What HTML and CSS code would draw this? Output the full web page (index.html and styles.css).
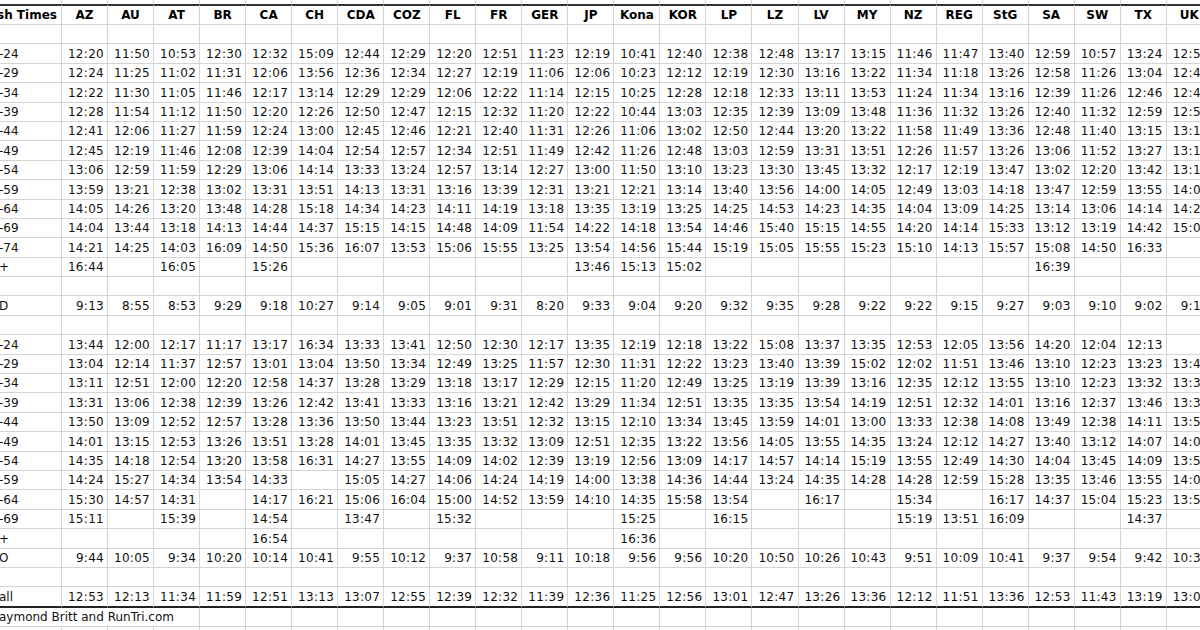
FILE: index.html
```html
<!DOCTYPE html>
<html>
<head>
<meta charset="utf-8">
<link rel="stylesheet" href="styles.css">
</head>
<body>
<div class="sheet">
<div class="row strip"><span class="lbl"></span><span></span><span></span><span></span><span></span><span></span><span></span><span></span><span></span><span></span><span></span><span></span><span></span><span></span><span></span><span></span><span></span><span></span><span></span><span></span><span></span><span></span><span></span><span></span><span></span><span></span></div>
<div class="row head"><span class="lbl">sh Times</span><span>AZ</span><span>AU</span><span>AT</span><span>BR</span><span>CA</span><span>CH</span><span>CDA</span><span>COZ</span><span>FL</span><span>FR</span><span>GER</span><span>JP</span><span>Kona</span><span>KOR</span><span>LP</span><span>LZ</span><span>LV</span><span>MY</span><span>NZ</span><span>REG</span><span>StG</span><span>SA</span><span>SW</span><span>TX</span><span>UK</span></div>
<div class="row"><span class="lbl"></span><span></span><span></span><span></span><span></span><span></span><span></span><span></span><span></span><span></span><span></span><span></span><span></span><span></span><span></span><span></span><span></span><span></span><span></span><span></span><span></span><span></span><span></span><span></span><span></span><span></span></div>
<div class="row"><span class="lbl">-24</span><span>12:20</span><span>11:50</span><span>10:53</span><span>12:30</span><span>12:32</span><span>15:09</span><span>12:44</span><span>12:29</span><span>12:20</span><span>12:51</span><span>11:23</span><span>12:19</span><span>10:41</span><span>12:40</span><span>12:38</span><span>12:48</span><span>13:17</span><span>13:15</span><span>11:46</span><span>11:47</span><span>13:40</span><span>12:59</span><span>10:57</span><span>13:24</span><span>12:52</span></div>
<div class="row"><span class="lbl">-29</span><span>12:24</span><span>11:25</span><span>11:02</span><span>11:31</span><span>12:06</span><span>13:56</span><span>12:36</span><span>12:34</span><span>12:27</span><span>12:19</span><span>11:06</span><span>12:06</span><span>10:23</span><span>12:12</span><span>12:19</span><span>12:30</span><span>13:16</span><span>13:22</span><span>11:34</span><span>11:18</span><span>13:26</span><span>12:58</span><span>11:26</span><span>13:04</span><span>12:41</span></div>
<div class="row"><span class="lbl">-34</span><span>12:22</span><span>11:30</span><span>11:05</span><span>11:46</span><span>12:17</span><span>13:14</span><span>12:29</span><span>12:29</span><span>12:06</span><span>12:22</span><span>11:14</span><span>12:15</span><span>10:25</span><span>12:28</span><span>12:18</span><span>12:33</span><span>13:11</span><span>13:53</span><span>11:24</span><span>11:34</span><span>13:16</span><span>12:39</span><span>11:26</span><span>12:46</span><span>12:44</span></div>
<div class="row"><span class="lbl">-39</span><span>12:28</span><span>11:54</span><span>11:12</span><span>11:50</span><span>12:20</span><span>12:26</span><span>12:50</span><span>12:47</span><span>12:15</span><span>12:32</span><span>11:20</span><span>12:22</span><span>10:44</span><span>13:03</span><span>12:35</span><span>12:39</span><span>13:09</span><span>13:48</span><span>11:36</span><span>11:32</span><span>13:26</span><span>12:40</span><span>11:32</span><span>12:59</span><span>12:55</span></div>
<div class="row"><span class="lbl">-44</span><span>12:41</span><span>12:06</span><span>11:27</span><span>11:59</span><span>12:24</span><span>13:00</span><span>12:45</span><span>12:46</span><span>12:21</span><span>12:40</span><span>11:31</span><span>12:26</span><span>11:06</span><span>13:02</span><span>12:50</span><span>12:44</span><span>13:20</span><span>13:22</span><span>11:58</span><span>11:49</span><span>13:36</span><span>12:48</span><span>11:40</span><span>13:15</span><span>13:10</span></div>
<div class="row"><span class="lbl">-49</span><span>12:45</span><span>12:19</span><span>11:46</span><span>12:08</span><span>12:39</span><span>14:04</span><span>12:54</span><span>12:57</span><span>12:34</span><span>12:51</span><span>11:49</span><span>12:42</span><span>11:26</span><span>12:48</span><span>13:03</span><span>12:59</span><span>13:31</span><span>13:51</span><span>12:26</span><span>11:57</span><span>13:26</span><span>13:06</span><span>11:52</span><span>13:27</span><span>13:14</span></div>
<div class="row"><span class="lbl">-54</span><span>13:06</span><span>12:59</span><span>11:59</span><span>12:29</span><span>13:06</span><span>14:14</span><span>13:33</span><span>13:24</span><span>12:57</span><span>13:14</span><span>12:27</span><span>13:00</span><span>11:50</span><span>13:10</span><span>13:23</span><span>13:30</span><span>13:45</span><span>13:32</span><span>12:17</span><span>12:19</span><span>13:47</span><span>13:02</span><span>12:20</span><span>13:42</span><span>13:17</span></div>
<div class="row"><span class="lbl">-59</span><span>13:59</span><span>13:21</span><span>12:38</span><span>13:02</span><span>13:31</span><span>13:51</span><span>14:13</span><span>13:31</span><span>13:16</span><span>13:39</span><span>12:31</span><span>13:21</span><span>12:21</span><span>13:14</span><span>13:40</span><span>13:56</span><span>14:00</span><span>14:05</span><span>12:49</span><span>13:03</span><span>14:18</span><span>13:47</span><span>12:59</span><span>13:55</span><span>14:02</span></div>
<div class="row"><span class="lbl">-64</span><span>14:05</span><span>14:26</span><span>13:20</span><span>13:48</span><span>14:28</span><span>15:18</span><span>14:34</span><span>14:23</span><span>14:11</span><span>14:19</span><span>13:18</span><span>13:35</span><span>13:19</span><span>13:25</span><span>14:25</span><span>14:53</span><span>14:23</span><span>14:35</span><span>14:04</span><span>13:09</span><span>14:25</span><span>13:14</span><span>13:06</span><span>14:14</span><span>14:20</span></div>
<div class="row"><span class="lbl">-69</span><span>14:04</span><span>13:44</span><span>13:18</span><span>14:13</span><span>14:44</span><span>14:37</span><span>15:15</span><span>14:15</span><span>14:48</span><span>14:09</span><span>11:54</span><span>14:22</span><span>14:18</span><span>13:54</span><span>14:46</span><span>15:40</span><span>15:15</span><span>14:55</span><span>14:20</span><span>14:14</span><span>15:33</span><span>13:12</span><span>13:19</span><span>14:42</span><span>15:01</span></div>
<div class="row"><span class="lbl">-74</span><span>14:21</span><span>14:25</span><span>14:03</span><span>16:09</span><span>14:50</span><span>15:36</span><span>16:07</span><span>13:53</span><span>15:06</span><span>15:55</span><span>13:25</span><span>13:54</span><span>14:56</span><span>15:44</span><span>15:19</span><span>15:05</span><span>15:55</span><span>15:23</span><span>15:10</span><span>14:13</span><span>15:57</span><span>15:08</span><span>14:50</span><span>16:33</span><span></span></div>
<div class="row"><span class="lbl">+</span><span>16:44</span><span></span><span>16:05</span><span></span><span>15:26</span><span></span><span></span><span></span><span></span><span></span><span></span><span>13:46</span><span>15:13</span><span>15:02</span><span></span><span></span><span></span><span></span><span></span><span></span><span></span><span>16:39</span><span></span><span></span><span></span></div>
<div class="row"><span class="lbl"></span><span></span><span></span><span></span><span></span><span></span><span></span><span></span><span></span><span></span><span></span><span></span><span></span><span></span><span></span><span></span><span></span><span></span><span></span><span></span><span></span><span></span><span></span><span></span><span></span><span></span></div>
<div class="row"><span class="lbl">D</span><span>9:13</span><span>8:55</span><span>8:53</span><span>9:29</span><span>9:18</span><span>10:27</span><span>9:14</span><span>9:05</span><span>9:01</span><span>9:31</span><span>8:20</span><span>9:33</span><span>9:04</span><span>9:20</span><span>9:32</span><span>9:35</span><span>9:28</span><span>9:22</span><span>9:22</span><span>9:15</span><span>9:27</span><span>9:03</span><span>9:10</span><span>9:02</span><span>9:14</span></div>
<div class="row"><span class="lbl"></span><span></span><span></span><span></span><span></span><span></span><span></span><span></span><span></span><span></span><span></span><span></span><span></span><span></span><span></span><span></span><span></span><span></span><span></span><span></span><span></span><span></span><span></span><span></span><span></span><span></span></div>
<div class="row"><span class="lbl">-24</span><span>13:44</span><span>12:00</span><span>12:17</span><span>11:17</span><span>13:17</span><span>16:34</span><span>13:33</span><span>13:41</span><span>12:50</span><span>12:30</span><span>12:17</span><span>13:35</span><span>12:19</span><span>12:18</span><span>13:22</span><span>15:08</span><span>13:37</span><span>13:35</span><span>12:53</span><span>12:05</span><span>13:56</span><span>14:20</span><span>12:04</span><span>12:13</span><span></span></div>
<div class="row"><span class="lbl">-29</span><span>13:04</span><span>12:14</span><span>11:37</span><span>12:57</span><span>13:01</span><span>13:04</span><span>13:50</span><span>13:34</span><span>12:49</span><span>13:25</span><span>11:57</span><span>12:30</span><span>11:31</span><span>12:22</span><span>13:23</span><span>13:40</span><span>13:39</span><span>15:02</span><span>12:02</span><span>11:51</span><span>13:46</span><span>13:10</span><span>12:23</span><span>13:23</span><span>13:45</span></div>
<div class="row"><span class="lbl">-34</span><span>13:11</span><span>12:51</span><span>12:00</span><span>12:20</span><span>12:58</span><span>14:37</span><span>13:28</span><span>13:29</span><span>13:18</span><span>13:17</span><span>12:29</span><span>12:15</span><span>11:20</span><span>12:49</span><span>13:25</span><span>13:19</span><span>13:39</span><span>13:16</span><span>12:35</span><span>12:12</span><span>13:55</span><span>13:10</span><span>12:23</span><span>13:32</span><span>13:31</span></div>
<div class="row"><span class="lbl">-39</span><span>13:31</span><span>13:06</span><span>12:38</span><span>12:39</span><span>13:26</span><span>12:42</span><span>13:41</span><span>13:33</span><span>13:16</span><span>13:21</span><span>12:42</span><span>13:29</span><span>11:34</span><span>12:51</span><span>13:35</span><span>13:35</span><span>13:54</span><span>14:19</span><span>12:51</span><span>12:32</span><span>14:01</span><span>13:16</span><span>12:37</span><span>13:46</span><span>13:38</span></div>
<div class="row"><span class="lbl">-44</span><span>13:50</span><span>13:09</span><span>12:52</span><span>12:57</span><span>13:28</span><span>13:36</span><span>13:50</span><span>13:44</span><span>13:23</span><span>13:51</span><span>12:32</span><span>13:15</span><span>12:10</span><span>13:34</span><span>13:45</span><span>13:59</span><span>14:01</span><span>13:00</span><span>13:33</span><span>12:38</span><span>14:08</span><span>13:49</span><span>12:38</span><span>14:11</span><span>13:52</span></div>
<div class="row"><span class="lbl">-49</span><span>14:01</span><span>13:15</span><span>12:53</span><span>13:26</span><span>13:51</span><span>13:28</span><span>14:01</span><span>13:45</span><span>13:35</span><span>13:32</span><span>13:09</span><span>12:51</span><span>12:35</span><span>13:22</span><span>13:56</span><span>14:05</span><span>13:55</span><span>14:35</span><span>13:24</span><span>12:12</span><span>14:27</span><span>13:40</span><span>13:12</span><span>14:07</span><span>14:03</span></div>
<div class="row"><span class="lbl">-54</span><span>14:35</span><span>14:18</span><span>12:54</span><span>13:20</span><span>13:58</span><span>16:31</span><span>14:27</span><span>13:55</span><span>14:09</span><span>14:02</span><span>12:39</span><span>13:19</span><span>12:56</span><span>13:09</span><span>14:17</span><span>14:57</span><span>14:14</span><span>15:19</span><span>13:55</span><span>12:49</span><span>14:30</span><span>14:04</span><span>13:45</span><span>14:09</span><span>13:58</span></div>
<div class="row"><span class="lbl">-59</span><span>14:24</span><span>15:27</span><span>14:34</span><span>13:54</span><span>14:33</span><span></span><span>15:05</span><span>14:27</span><span>14:06</span><span>14:24</span><span>14:19</span><span>14:00</span><span>13:38</span><span>14:36</span><span>14:44</span><span>13:24</span><span>14:35</span><span>14:28</span><span>14:28</span><span>12:59</span><span>15:28</span><span>13:35</span><span>13:46</span><span>13:55</span><span>14:06</span></div>
<div class="row"><span class="lbl">-64</span><span>15:30</span><span>14:57</span><span>14:31</span><span></span><span>14:17</span><span>16:21</span><span>15:06</span><span>16:04</span><span>15:00</span><span>14:52</span><span>13:59</span><span>14:10</span><span>14:35</span><span>15:58</span><span>13:54</span><span></span><span>16:17</span><span></span><span>15:34</span><span></span><span>16:17</span><span>14:37</span><span>15:04</span><span>15:23</span><span>13:57</span></div>
<div class="row"><span class="lbl">-69</span><span>15:11</span><span></span><span>15:39</span><span></span><span>14:54</span><span></span><span>13:47</span><span></span><span>15:32</span><span></span><span></span><span></span><span>15:25</span><span></span><span>16:15</span><span></span><span></span><span></span><span>15:19</span><span>13:51</span><span>16:09</span><span></span><span></span><span>14:37</span><span></span></div>
<div class="row"><span class="lbl">+</span><span></span><span></span><span></span><span></span><span>16:54</span><span></span><span></span><span></span><span></span><span></span><span></span><span></span><span>16:36</span><span></span><span></span><span></span><span></span><span></span><span></span><span></span><span></span><span></span><span></span><span></span><span></span></div>
<div class="row"><span class="lbl">O</span><span>9:44</span><span>10:05</span><span>9:34</span><span>10:20</span><span>10:14</span><span>10:41</span><span>9:55</span><span>10:12</span><span>9:37</span><span>10:58</span><span>9:11</span><span>10:18</span><span>9:56</span><span>9:56</span><span>10:20</span><span>10:50</span><span>10:26</span><span>10:43</span><span>9:51</span><span>10:09</span><span>10:41</span><span>9:37</span><span>9:54</span><span>9:42</span><span>10:36</span></div>
<div class="row"><span class="lbl"></span><span></span><span></span><span></span><span></span><span></span><span></span><span></span><span></span><span></span><span></span><span></span><span></span><span></span><span></span><span></span><span></span><span></span><span></span><span></span><span></span><span></span><span></span><span></span><span></span><span></span></div>
<div class="row total"><span class="lbl">all</span><span>12:53</span><span>12:13</span><span>11:34</span><span>11:59</span><span>12:51</span><span>13:13</span><span>13:07</span><span>12:55</span><span>12:39</span><span>12:32</span><span>11:39</span><span>12:36</span><span>11:25</span><span>12:56</span><span>13:01</span><span>12:47</span><span>13:26</span><span>13:36</span><span>12:12</span><span>11:51</span><span>13:36</span><span>12:53</span><span>11:43</span><span>13:19</span><span>13:05</span></div>
<div class="row credit"><span class="lbl span4">aymond Britt and RunTri.com</span><span></span><span></span><span></span><span></span><span></span><span></span><span></span><span></span><span></span><span></span><span></span><span></span><span></span><span></span><span></span><span></span><span></span><span></span><span></span><span></span><span></span><span></span></div>
<div class="row strip"><span class="lbl"></span><span></span><span></span><span></span><span></span><span></span><span></span><span></span><span></span><span></span><span></span><span></span><span></span><span></span><span></span><span></span><span></span><span></span><span></span><span></span><span></span><span></span><span></span><span></span><span></span><span></span></div>
</div>
</body>
</html>
```

FILE: styles.css
```css
html, body {
  margin: 0;
  padding: 0;
  background: #ffffff;
}

body {
  width: 1200px;
  height: 630px;
  overflow: hidden;
}

.sheet {
  width: 1213px;
  font-family: "DejaVu Sans", Verdana, sans-serif;
  font-size: 12px;
  color: #111111;
}

.row {
  display: grid;
  grid-template-columns: 62px repeat(25, 46.04px);
  height: 19.4px;
}

.row > span {
  box-sizing: border-box;
  display: flex;
  align-items: flex-end;
  justify-content: flex-end;
  padding: 0 3px 2px 0;
  line-height: 14px;
  letter-spacing: 0.3px;
  white-space: nowrap;
  overflow: hidden;
  border-right: 1px solid #d4d4d4;
  border-bottom: 1px solid #d4d4d4;
}

.row > span.lbl {
  justify-content: flex-start;
  padding: 0 0 2px 0;
  margin-left: -1px;
  letter-spacing: 0;
}

.row.strip {
  height: 4px;
}

.row.strip > span {
  border-bottom: none;
  padding: 0;
}

.row.head {
  height: 21px;
}

.row.head > span {
  border-top: 2px solid #333333;
  justify-content: center;
  padding: 0 0 2px 0;
  font-weight: bold;
  font-size: 12px;
  letter-spacing: 0;
  color: #000000;
}

.row.head > span.lbl {
  justify-content: flex-start;
  margin-left: -3px;
}

.row.total {
  height: 20.4px;
}

.row.total > span {
  border-bottom: 2px solid #222222;
}

.row.credit {
  height: 19.4px;
}

.row.credit > span.span4 {
  grid-column: span 4;
  overflow: visible;
}
```
